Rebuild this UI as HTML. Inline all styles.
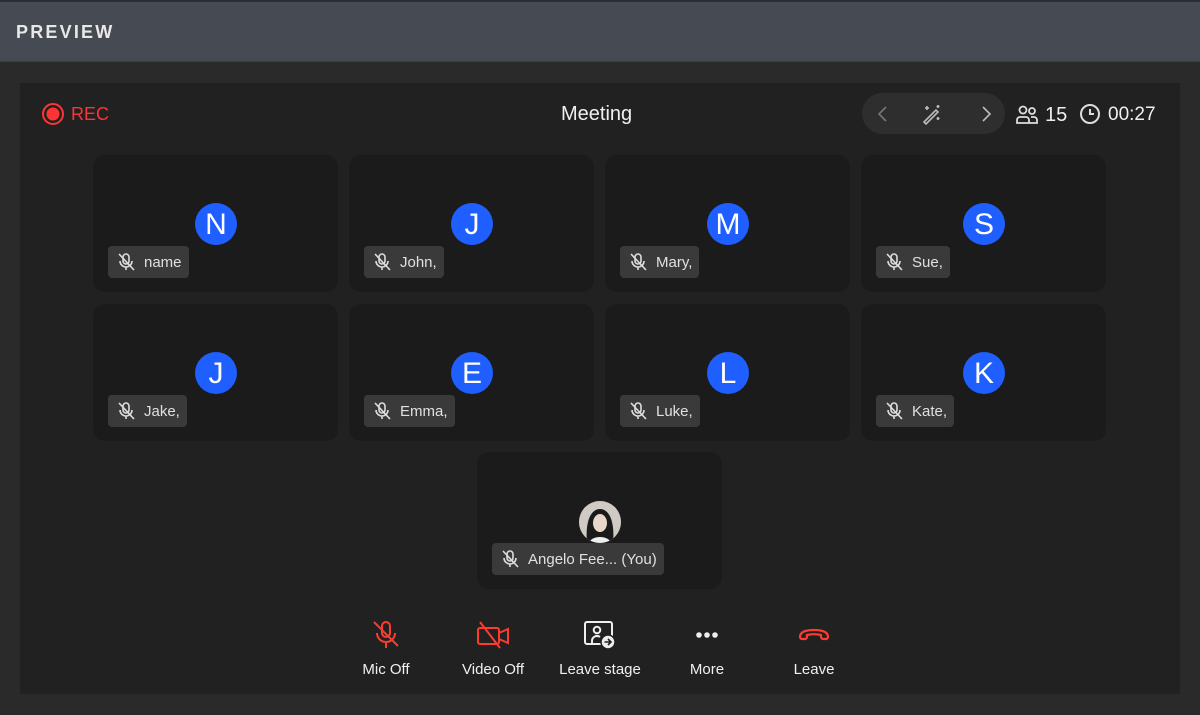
<!DOCTYPE html>
<html><head><meta charset="utf-8"><style>
*{box-sizing:border-box;margin:0;padding:0}
body{width:1200px;height:715px;background:#2a2a2a;font-family:"Liberation Sans",sans-serif;position:relative;overflow:hidden;color:#e6e6e6}
.top{position:absolute;left:0;top:0;width:1200px;height:62px;background:#454a53;border-top:2px solid #2a2d33;border-bottom:1px solid #3a3d44}
.top span{position:absolute;left:16px;top:20px;font-weight:bold;font-size:18px;letter-spacing:2.2px;color:#e8e8e8}
.panel{position:absolute;left:20px;top:83px;width:1160px;height:611px;background:#212121}
.tile{position:absolute;width:245px;height:137px;background:#1b1b1b;border-radius:12px}
.av{position:absolute;left:102px;top:48px;width:42px;height:42px;border-radius:50%;background:#1f5eff;color:#fff;font-size:30px;text-align:center;line-height:43px}
.lab{position:absolute;left:15px;top:91px;height:32px;background:#3a3a3a;border-radius:4px;padding:0 7px 0 36px;font-size:15px;line-height:33px;color:#e0e0e0}
.lab svg{position:absolute;left:8px;top:6px}
.abs{position:absolute}
.btn{position:absolute;top:619px;width:100px;text-align:center;font-size:15px;color:#f0f0f0}
.btn svg{display:block;margin:0 auto 10px}
</style></head><body>
<div class="top"><span>PREVIEW</span></div>
<div class="panel"></div>
<svg class="abs" style="left:41px;top:102px" width="24" height="24"><circle cx="12" cy="12" r="10" fill="none" stroke="#ff3333" stroke-width="2"/><circle cx="12" cy="12" r="6.5" fill="#ff3333"/></svg>
<div class="abs" style="left:71px;top:104px;font-size:18px;color:#ff3333">REC</div>
<div class="abs" style="left:561px;top:103px;font-size:20px;color:#f0f0f0">Meeting</div>
<div class="abs" style="left:862px;top:93px;width:143px;height:41px;border-radius:21px;background:#2e2e2e"></div>
<svg class="abs" style="left:873px;top:104px" width="20" height="20"><path d="M13 3 6 10l7 7" fill="none" stroke="#777" stroke-width="1.6"/></svg>
<svg class="abs" style="left:976px;top:104px" width="20" height="20"><path d="M7 3l7 7-7 7" fill="none" stroke="#bbb" stroke-width="1.6"/></svg>
<svg class="abs" style="left:921px;top:103px" width="22" height="22" fill="none" stroke="#bbb" stroke-width="1.6"><path d="M3 19 15 7l2 2L5 21z"/><path d="M6 3v4M4 5h4M17 2v3M15.5 3.5h3M17 14v3M15.5 15.5h3"/></svg>
<svg class="abs" style="left:1015px;top:104px" width="24" height="22" fill="none" stroke="#ddd" stroke-width="1.8"><circle cx="8" cy="6" r="3.5"/><circle cx="17" cy="7" r="3"/><path d="M2 19v-3a3 3 0 0 1 3-3h6a3 3 0 0 1 3 3v3zM16 13h3a3 3 0 0 1 3 3v3h-8"/></svg>
<div class="abs" style="left:1045px;top:104px;font-size:20px;color:#eee">15</div>
<svg class="abs" style="left:1079px;top:103px" width="22" height="22" fill="none" stroke="#ddd" stroke-width="2"><circle cx="11" cy="11" r="9"/><path d="M11 6v5h4"/></svg>
<div class="abs" style="left:1108px;top:104px;font-size:19px;color:#eee">00:27</div>

<div id="tiles"></div>
<script>
const mic='<svg width="20" height="20" fill="none" stroke="#ddd" stroke-width="1.6"><rect x="7" y="2" width="6" height="10" rx="3"/><path d="M4 9a6 6 0 0 0 12 0M10 15v3M3 2l15 16"/></svg>';
const d=[[93,155,'N','name'],[349,155,'J','John,'],[605,155,'M','Mary,'],[861,155,'S','Sue,'],[93,304,'J','Jake,'],[349,304,'E','Emma,'],[605,304,'L','Luke,'],[861,304,'K','Kate,']];
let h='';
for(const t of d){h+=`<div class="tile" style="left:${t[0]}px;top:${t[1]}px"><div class="av">${t[2]}</div><div class="lab">${mic}${t[3]}</div></div>`;}
h+=`<div class="tile" style="left:477px;top:452px"><div class="av" style="background:#8a8580;top:49px;overflow:hidden"><svg width="42" height="42"><rect width="42" height="42" fill="#cfcac4"/><path d="M8 42C6 20 12 8 21 8s15 12 13 34z" fill="#1a1a1a"/><ellipse cx="21" cy="22" rx="7" ry="9" fill="#e8d6c8"/><path d="M10 42c2-8 20-8 22 0z" fill="#eee"/></svg></div><div class="lab" style="top:91px">${mic}Angelo Fee... (You)</div></div>`;
document.getElementById('tiles').innerHTML=h;
</script>

<div class="btn" style="left:336px"><svg width="32" height="32" fill="none" stroke="#ff3b30" stroke-width="2"><rect x="12" y="3" width="8" height="15" rx="4"/><path d="M7 14a9 9 0 0 0 18 0M16 23v6M4 3l24 24"/></svg>Mic Off</div>
<div class="btn" style="left:443px"><svg width="34" height="32" fill="none" stroke="#ff3b30" stroke-width="2"><rect x="2" y="9" width="21" height="16" rx="2"/><path d="M23 14l9-4v14l-9-4M4 3l20 26"/></svg>Video Off</div>
<div class="btn" style="left:550px"><svg width="34" height="32" fill="none" stroke="#eee" stroke-width="2"><rect x="2" y="3" width="27" height="22" rx="2"/><circle cx="14" cy="11" r="3.3"/><path d="M9 25v-3a5 5 0 0 1 8-4"/><circle cx="25" cy="23" r="7" fill="#eee" stroke="#212121" stroke-width="1.5"/><path d="M21.5 23h6M25 20l3 3-3 3" stroke="#212121" stroke-width="1.6"/></svg>Leave stage</div>
<div class="btn" style="left:657px"><svg width="32" height="32"><circle cx="8" cy="16" r="2.8" fill="#eee"/><circle cx="16" cy="16" r="2.8" fill="#eee"/><circle cx="24" cy="16" r="2.8" fill="#eee"/></svg>More</div>
<div class="btn" style="left:764px"><svg width="34" height="32" fill="none" stroke="#ff3b30" stroke-width="2.2"><path d="M3 18c0-5 6-7 14-7s14 2 14 7c0 1-1 2-2 2h-3c-1 0-2-1-2-2v-2c-4-1-10-1-14 0v2c0 1-1 2-2 2H5c-1 0-2-1-2-2z"/></svg>Leave</div>
</body></html>
